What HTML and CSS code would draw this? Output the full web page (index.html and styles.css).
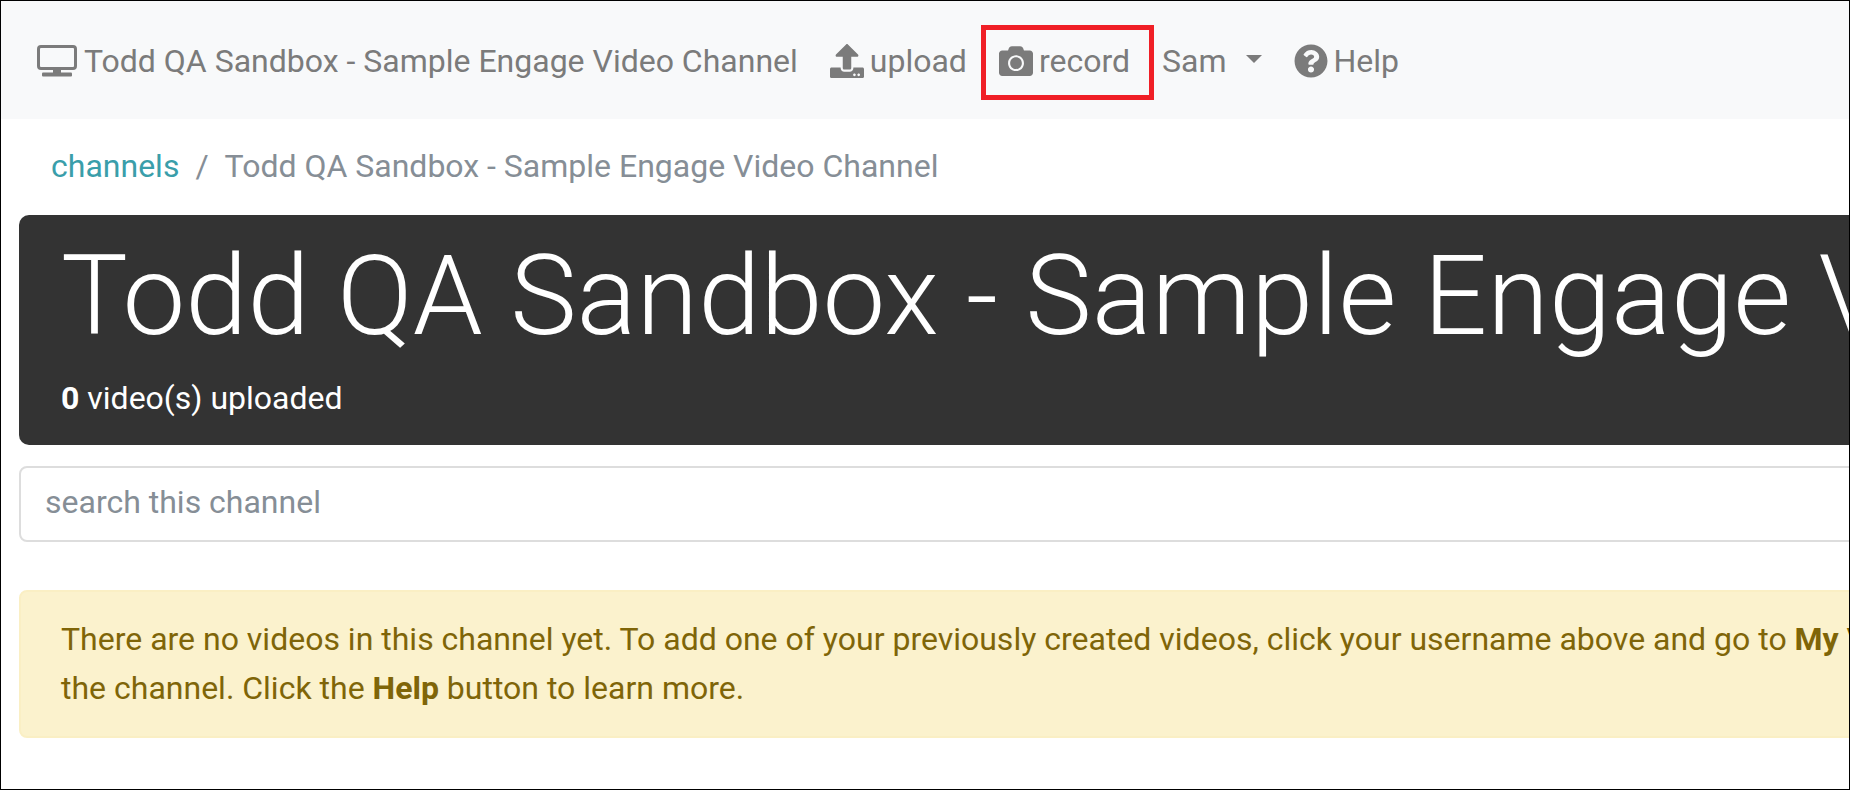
FILE: index.html
```html
<!DOCTYPE html>
<html lang="en">
<head>
<meta charset="utf-8">
<title>Todd QA Sandbox - Sample Engage Video Channel</title>
<link rel="stylesheet" href="styles.css">
</head>
<body>
<div class="frame">
  <nav class="nav">
    <a class="brand nav-item">
      <svg class="icon icon-desktop" viewBox="0 0 40 32"><rect x="1.5" y="1.5" width="37" height="22" rx="2.5" fill="none" stroke="currentColor" stroke-width="3"/><rect x="16" y="24" width="8" height="4" fill="currentColor"/><rect x="5" y="27.5" width="30" height="4" rx="1" fill="currentColor"/></svg>
      <span>Todd QA Sandbox - Sample Engage Video Channel</span>
    </a>
    <a class="nav-item item-upload">
      <svg class="icon" viewBox="0 0 512 512"><path fill="currentColor" d="M296 384h-80c-13.3 0-24-10.7-24-24V192h-87.7c-17.8 0-26.7-21.5-14.1-34.1L242.3 5.7c7.5-7.5 19.8-7.5 27.3 0l152.2 152.2c12.6 12.6 3.7 34.1-14.1 34.1H320v168c0 13.3-10.7 24-24 24zm216-8v112c0 13.3-10.7 24-24 24H24c-13.3 0-24-10.7-24-24V376c0-13.3 10.7-24 24-24h136v8c0 30.9 25.1 56 56 56h80c30.9 0 56-25.1 56-56v-8h136c13.3 0 24 10.7 24 24zm-124 88c0-11-9-20-20-20s-20 9-20 20 9 20 20 20 20-9 20-20zm64 0c0-11-9-20-20-20s-20 9-20 20 9 20 20 20 20-9 20-20z"/></svg>
      <span>upload</span>
    </a>
    <a class="nav-item item-record">
      <svg class="icon" viewBox="0 0 512 512"><path fill="currentColor" d="M512 144v288c0 26.5-21.5 48-48 48H48c-26.5 0-48-21.5-48-48V144c0-26.5 21.5-48 48-48h88l12.3-32.9c7-18.7 24.9-31.1 44.9-31.1h125.5c20 0 37.9 12.4 44.9 31.1L376 96h88c26.5 0 48 21.5 48 48zM376 288c0-66.2-53.8-120-120-120s-120 53.8-120 120 53.8 120 120 120 120-53.8 120-120zm-32 0c0 48.5-39.5 88-88 88s-88-39.5-88-88 39.5-88 88-88 88 39.5 88 88z"/></svg>
      <span>record</span>
      <i class="highlight"></i>
    </a>
    <a class="nav-item item-user">
      <span>Sam</span>
      <i class="caret"></i>
    </a>
    <a class="nav-item item-help">
      <svg class="icon" viewBox="0 0 512 512"><path fill="currentColor" d="M504 256c0 136.997-111.043 248-248 248S8 392.997 8 256C8 119.083 119.043 8 256 8s248 111.083 248 248zM262.655 90c-54.497 0-89.255 22.957-116.549 63.758-3.536 5.286-2.353 12.415 2.715 16.258l34.699 26.31c5.205 3.947 12.621 3.008 16.665-2.122 17.864-22.658 30.113-35.797 57.303-35.797 20.429 0 45.698 13.148 45.698 32.958 0 14.976-12.363 22.667-32.534 33.976C247.128 238.528 216 254.941 216 296v4c0 6.627 5.373 12 12 12h56c6.627 0 12-5.373 12-12v-1.333c0-28.462 83.186-29.647 83.186-106.667 0-58.002-60.165-102-116.531-102zM256 338c-25.365 0-46 20.635-46 46 0 25.364 20.635 46 46 46s46-20.636 46-46c0-25.365-20.635-46-46-46z"/></svg>
      <span>Help</span>
    </a>
  </nav>
  <main class="main">
    <ol class="breadcrumb">
      <li><a class="crumb-link">channels</a></li>
      <li class="crumb-sep">/</li>
      <li class="crumb-current">Todd QA Sandbox - Sample Engage Video Channel</li>
    </ol>
    <section class="jumbotron">
      <h1 class="title">Todd QA Sandbox - Sample Engage Video Channel</h1>
      <p class="count"><strong>0</strong> video(s) uploaded</p>
    </section>
    <div class="search">search this channel</div>
    <div class="alert">
      There are no videos in this channel yet. To add one of your previously created videos, click your username above and go to <strong>My Videos</strong> and add it to<br>
      the channel. Click the <strong>Help</strong> button to learn more.
    </div>
  </main>
</div>
</body>
</html>
```

FILE: styles.css
```css
* { box-sizing: border-box; }
html, body { margin: 0; padding: 0; height: 100%; overflow: hidden; background: #fff; }
body { font-family: Roboto, "Liberation Sans", sans-serif; font-size: 32px; line-height: 1.5; color: #212529; }
.frame { width: 1850px; height: 790px; border: 1px solid #000; overflow: hidden; }
.nav { display: flex; align-items: center; height: 118px; padding: 2px 0 0 36px; background: #f8f9fa; color: #7b7b7b; white-space: nowrap; }
.nav-item { display: flex; align-items: center; position: relative; gap: 6px; }
.icon { width: 34px; height: 34px; flex: none; }
.icon-desktop { width: 40px; height: 32px; }
.brand { gap: 7px; }
.item-upload { margin-left: 32px; }
.item-record { margin-left: 32px; }
.item-user { margin-left: 32px; gap: 20px; }
.item-help { margin-left: 32px; gap: 5px; }
.caret { width: 0; height: 0; border-left: 8px solid transparent; border-right: 8px solid transparent; border-top: 8px solid currentColor; margin-top: -5px; }
.highlight { position: absolute; left: -18px; right: -24px; top: -12px; bottom: -15px; border: 5px solid #f01f26; }
.main { padding: 0 0 0 18px; width: 2400px; }
.breadcrumb { display: flex; list-style: none; margin: 0; padding: 0 0 2px 32px; height: 96px; align-items: center; white-space: nowrap; color: #868e96; }
.crumb-link { color: #3a9eaa; }
.crumb-sep { margin: 0 16px; color: #868e96; }
.jumbotron { height: 230px; background: #333; color: #fff; border-radius: 10px; padding: 14px 42px 0; white-space: nowrap; }
.title { margin: 0; font-size: 112px; font-weight: 300; line-height: 1.2; }
.count { margin: 11px 0 0; line-height: 48px; }
.count strong { font-weight: 700; }
.search { margin-top: 21px; height: 76px; border: 2px solid #ddd; border-radius: 8px; padding: 0 0 5px 24px; display: flex; align-items: center; color: #868e96; }
.alert { margin-top: 48px; height: 148px; background: #fbf2cd; border: 2px solid #faefc4; border-radius: 8px; padding: 23px 0 0 40px; color: #7f6508; white-space: nowrap; line-height: 49px; }
.alert strong { font-weight: 700; }
```
